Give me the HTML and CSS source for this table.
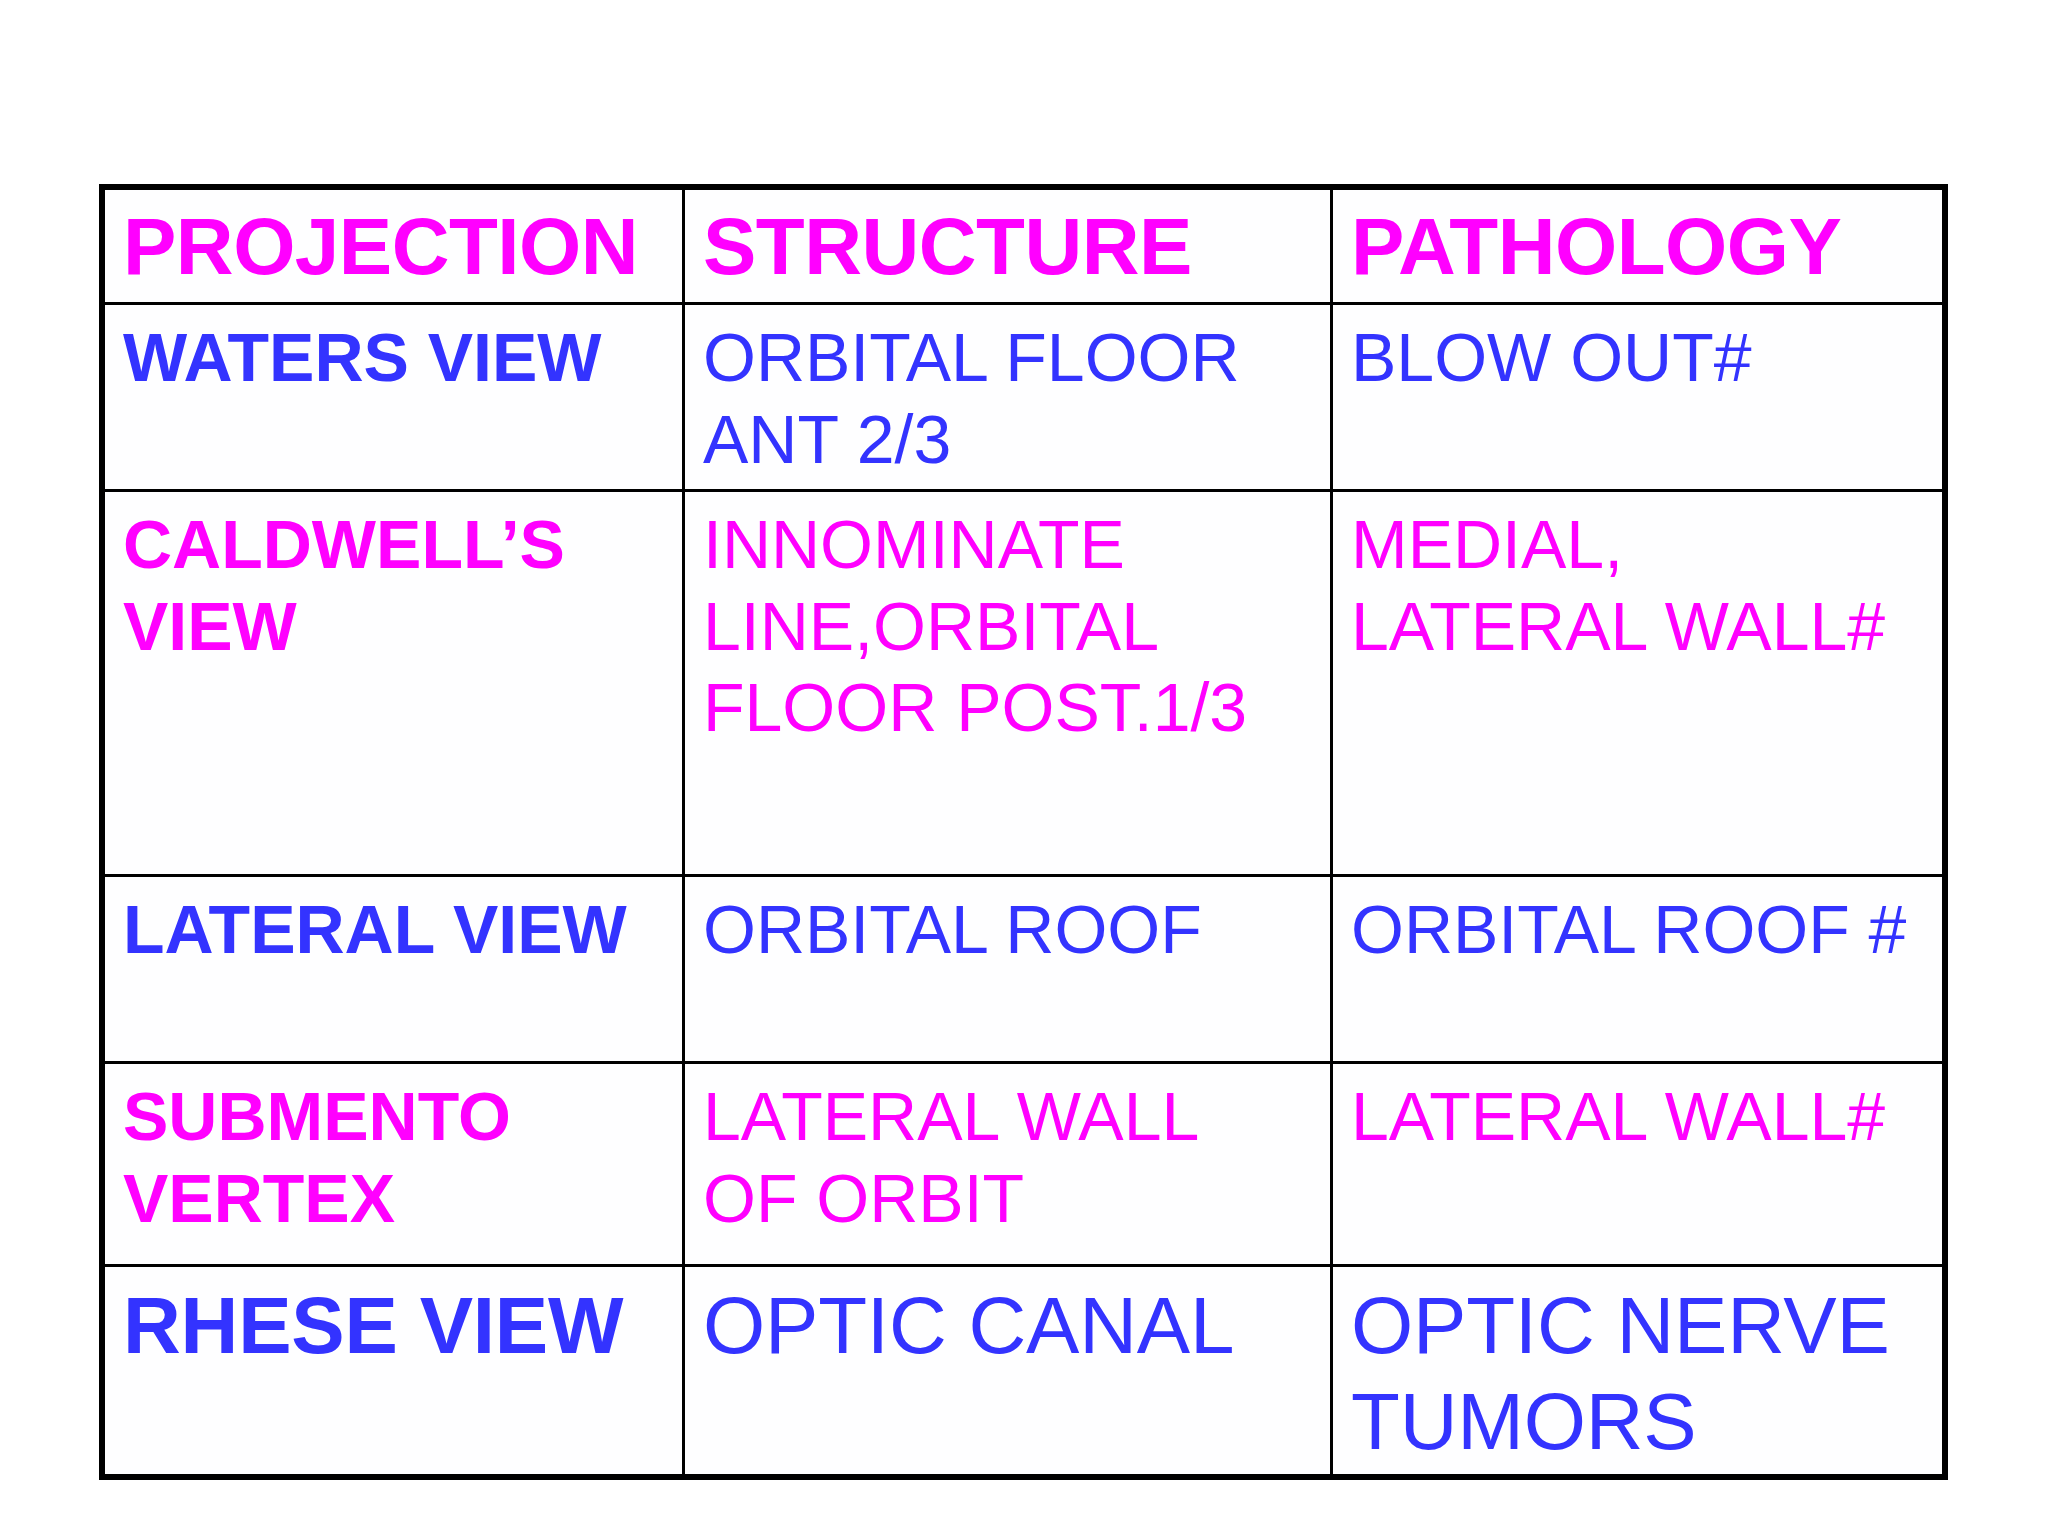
FILE: index.html
```html
<!DOCTYPE html>
<html>
<head>
<meta charset="utf-8">
<link rel="stylesheet" href="styles.css">
</head>
<body>
<div class="slide">
  <div class="grid">
    <div class="cell head pink"><b>PROJECTION</b></div>
    <div class="cell head pink"><b>STRUCTURE</b></div>
    <div class="cell head pink"><b>PATHOLOGY</b></div>

    <div class="cell blue"><b>WATERS VIEW</b></div>
    <div class="cell blue">ORBITAL FLOOR<br>ANT 2/3</div>
    <div class="cell blue">BLOW OUT#</div>

    <div class="cell pink"><b>CALDWELL’S<br>VIEW</b></div>
    <div class="cell pink">INNOMINATE<br>LINE,ORBITAL<br>FLOOR POST.1/3</div>
    <div class="cell pink">MEDIAL,<br>LATERAL WALL#</div>

    <div class="cell blue"><b>LATERAL VIEW</b></div>
    <div class="cell blue">ORBITAL ROOF</div>
    <div class="cell blue">ORBITAL ROOF #</div>

    <div class="cell pink"><b>SUBMENTO<br>VERTEX</b></div>
    <div class="cell pink">LATERAL WALL<br>OF ORBIT</div>
    <div class="cell pink">LATERAL WALL#</div>

    <div class="cell big blue"><b>RHESE VIEW</b></div>
    <div class="cell big blue">OPTIC CANAL</div>
    <div class="cell big blue">OPTIC NERVE<br>TUMORS</div>
  </div>
</div>
</body>
</html>
```

FILE: styles.css
```css
html, body {
  margin: 0;
  padding: 0;
  background: #ffffff;
}

.slide {
  width: 2048px;
  height: 1536px;
  padding: 184px 0 0 99px;
  box-sizing: border-box;
  font-family: "Liberation Sans", Arial, sans-serif;
}

.grid {
  display: grid;
  width: 1849px;
  box-sizing: border-box;
  border: 6px solid #000;
  background: #000;
  grid-template-columns: 577px 645px 609px;
  grid-template-rows: 112px 184px 382px 184px 200px 207px;
  gap: 3px;
}

.cell {
  background: #fefeff;
  padding: 12px 10px 0 18px;
  font-size: 68px;
  line-height: 81.6px;
  letter-spacing: 0;
  white-space: nowrap;
  overflow: visible;
}

.cell b {
  font-weight: bold;
}

.cell.head {
  padding-top: 9px;
  font-size: 80px;
  line-height: 96px;
  letter-spacing: -0.5px;
}

.cell.big {
  padding-top: 11px;
  font-size: 80px;
  line-height: 96px;
  letter-spacing: -0.2px;
}

.pink {
  color: #ff00ff;
}

.blue {
  color: #3333ff;
}
```
